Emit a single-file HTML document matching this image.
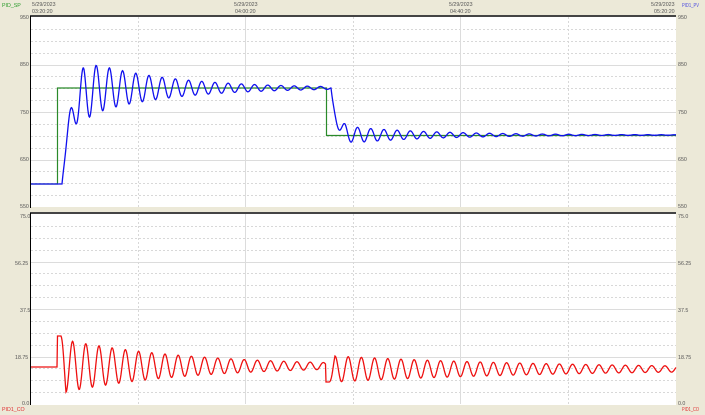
<!DOCTYPE html>
<html><head><meta charset="utf-8"><style>
body{margin:0;width:705px;height:415px;background:#ECE9D8;overflow:hidden;font-family:"Liberation Sans",sans-serif}
svg{position:absolute;left:0;top:0}
text{font-family:"Liberation Sans",sans-serif;font-size:5.3px;fill:#555}
</style></head><body>
<svg width="705" height="415" id="s">
<rect x="30" y="17" width="646" height="190" fill="#fff"/>
<rect x="30" y="214" width="646" height="191" fill="#fff"/>
<g id="grid"></g>
<line x1="30" y1="16" x2="676" y2="16" stroke="#444" stroke-width="2"/>
<line x1="30" y1="213" x2="676" y2="213" stroke="#444" stroke-width="2"/>
<line x1="30.5" y1="16" x2="30.5" y2="208" stroke="#000"/>
<line x1="30.5" y1="213" x2="30.5" y2="405" stroke="#000"/>
<g id="tr"></g>
<text x="2" y="7" style="fill:#2a9a2a">PID_SP</text>
<text x="682" y="7" textLength="17" lengthAdjust="spacingAndGlyphs" style="fill:#4a4ae0">PID1_PV</text>
<text x="2" y="411" style="fill:#e03030">PID1_CO</text>
<text x="682" y="411" textLength="17" lengthAdjust="spacingAndGlyphs" style="fill:#e03030">PID1_CO</text>
<text x="32" y="6">5/29/2023</text><text x="32" y="13">03:20:20</text>
<text x="234" y="6">5/29/2023</text><text x="235" y="13">04:00:20</text>
<text x="449" y="6">5/29/2023</text><text x="450" y="13">04:40:20</text>
<text x="651" y="6">5/29/2023</text><text x="654" y="13">05:20:20</text>
<text x="20" y="19">950</text><text x="678" y="19">950</text>
<text x="20" y="66">850</text><text x="678" y="66">850</text>
<text x="20" y="114">750</text><text x="678" y="114">750</text>
<text x="20" y="161">650</text><text x="678" y="161">650</text>
<text x="20" y="208">550</text><text x="678" y="208">550</text>
<text x="20" y="218">75.0</text><text x="678" y="218">75.0</text>
<text x="15" y="265">56.25</text><text x="678" y="265">56.25</text>
<text x="20" y="312">37.5</text><text x="678" y="312">37.5</text>
<text x="15" y="359">18.75</text><text x="678" y="359">18.75</text>
<text x="22" y="405">0.0</text><text x="678" y="405">0.0</text>
</svg>
<script>
var N='http://www.w3.org/2000/svg',g=document.getElementById('grid'),tr=document.getElementById('tr');
function L(p,x1,y1,x2,y2,c,d){var l=document.createElementNS(N,'line');l.setAttribute('x1',x1);l.setAttribute('y1',y1);l.setAttribute('x2',x2);l.setAttribute('y2',y2);l.setAttribute('stroke',c);if(d)l.setAttribute('stroke-dasharray',d);p.appendChild(l);}
function P(d,c,w){var p=document.createElementNS(N,'path');p.setAttribute('d',d);p.setAttribute('fill','none');p.setAttribute('stroke',c);p.setAttribute('stroke-width',w||1.3);tr.appendChild(p);}
[[17,207],[214,404]].forEach(function(r){var h=(r[1]-r[0])/4;for(var i=0;i<4;i++){for(var j=1;j<4;j++){var y=Math.round(r[0]+h*i+h*j/4)+.5;L(g,31,y,676,y,'#d8d8d8','2,2');}if(i>0){var y2=Math.round(r[0]+h*i)+.5;L(g,31,y2,676,y2,'#dcdcdc');}}
[138,353,568].forEach(function(x){L(g,x+.5,r[0],x+.5,r[1],'#d8d8d8','2,2');});[245,460].forEach(function(x){L(g,x+.5,r[0],x+.5,r[1],'#dcdcdc');});});
P('M31 184H57.5V88H326.5V135.5H676','#2a8a2a',1.2);
var T=2*Math.PI/13.2,d='';
for(var x=31;x<=676;x+=0.5){var y;
if(x<62)y=184;
else if(x<331){var t=x-62,c=88+96*Math.exp(-t/8),A=24*Math.exp(-(x-96)/82)*Math.min(1,t/22);y=c-A*Math.cos(T*(x-83));}
else{var t=x-331,c=135-47*Math.exp(-t/5),A=8*Math.exp(-(x-351)/90)*Math.min(1,t/14);y=c+A*Math.cos(T*(x-351));}
y=Math.max(y,60);d+=(d?'L':'M')+x+' '+y.toFixed(1);}
P(d,'#1010ee');
d='';
for(var x=31;x<=676;x+=0.5){var y;
if(x<57.5)y=367;
else if(x<61)y=336;
else if(x<326){var A=26*Math.exp(-(x-66)/128);y=366+A*Math.cos(T*(x-66));if(x<66)y=336+(y-336)*Math.min(1,(x-61)/5);}
else if(x<329)y=382;
else{var A=13*Math.exp(-(x-335)/236);y=369-A*Math.cos(T*(x-335));if(x<335)y=382+(y-382)*((x-329)/6);}
d+=(d?'L':'M')+x+' '+y.toFixed(1);}
P(d,'#ee1010');
</script>
</body></html>
